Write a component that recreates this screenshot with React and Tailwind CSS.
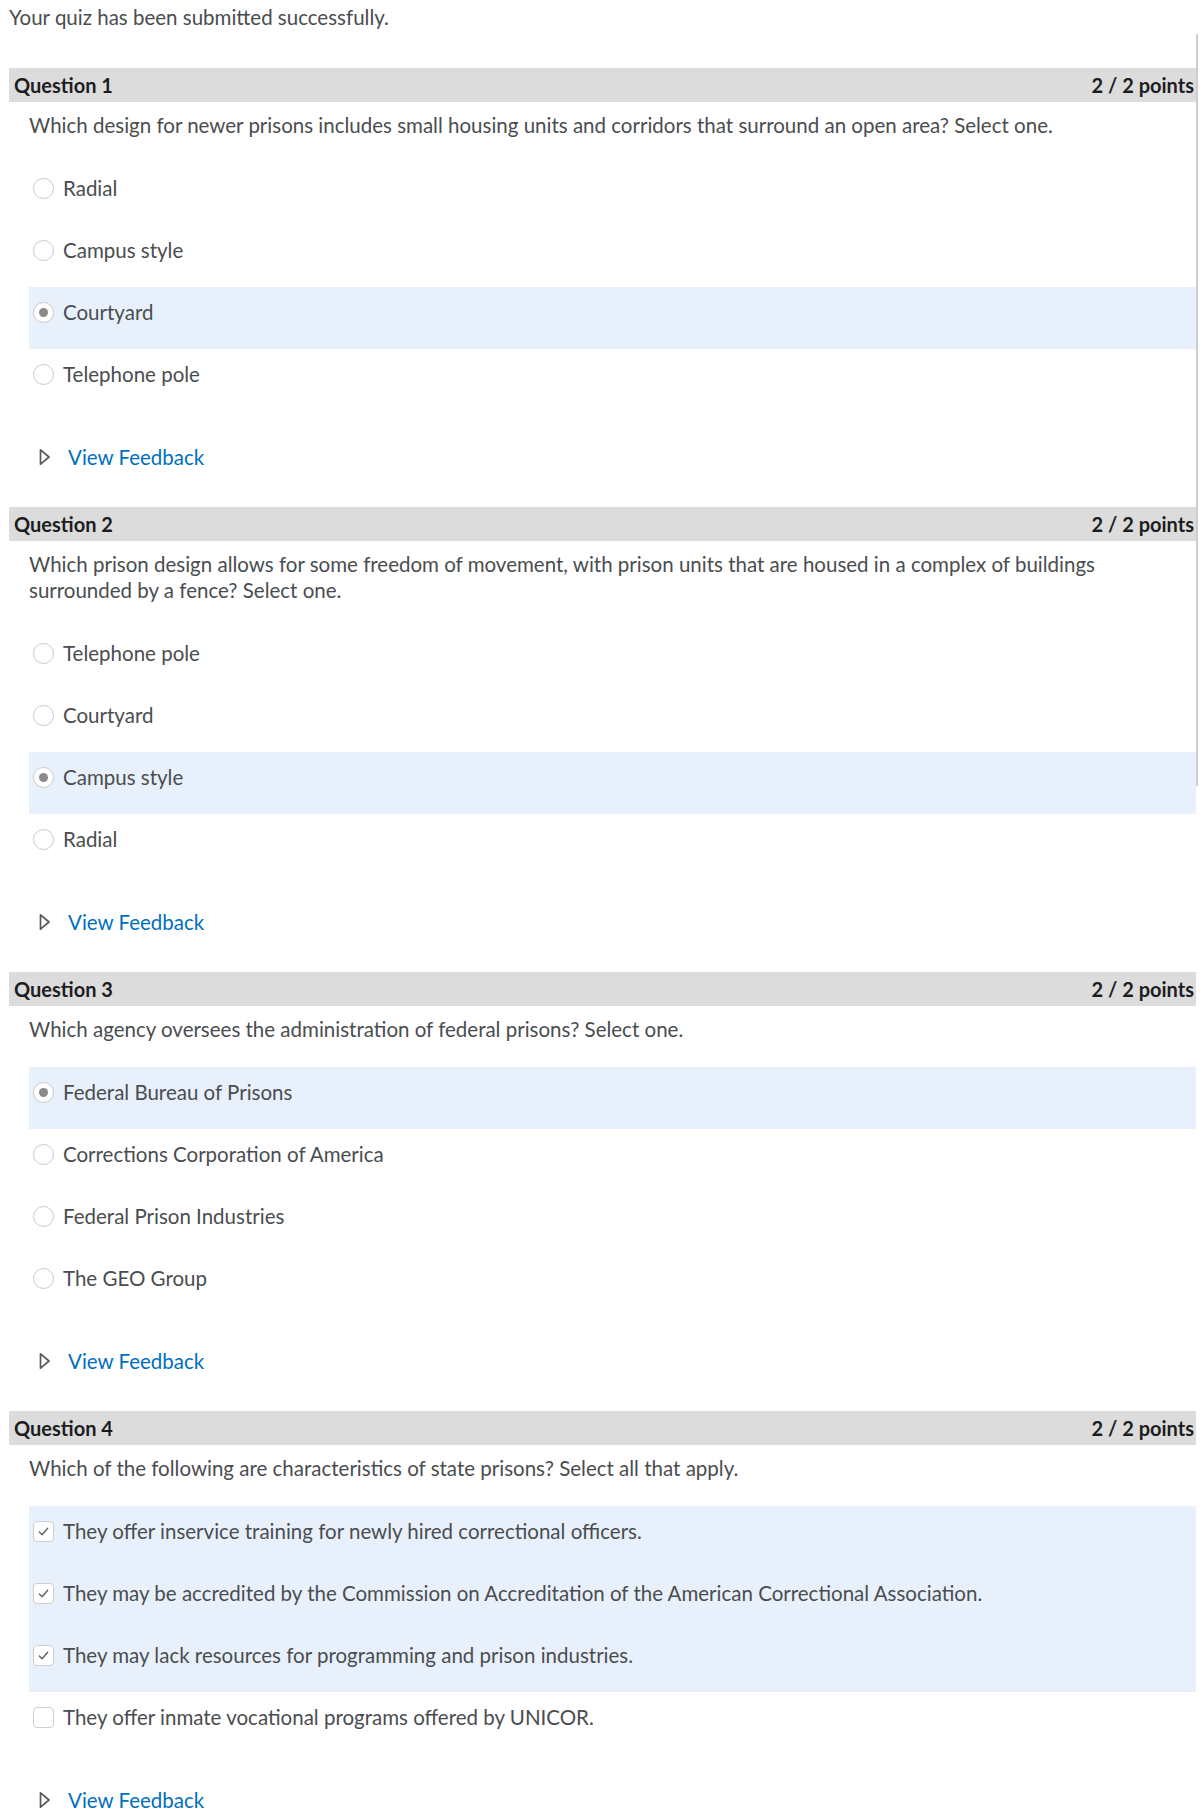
import React from 'react'

const questions = [
  {
    id: 1,
    text: 'Which design for newer prisons includes small housing units and corridors that surround an open area? Select one.',
    type: 'radio',
    options: [
      { label: 'Radial' },
      { label: 'Campus style' },
      { label: 'Courtyard', selected: true },
      { label: 'Telephone pole' },
    ],
  },
  {
    id: 2,
    text: 'Which prison design allows for some freedom of movement, with prison units that are housed in a complex of buildings surrounded by a fence? Select one.',
    type: 'radio',
    options: [
      { label: 'Telephone pole' },
      { label: 'Courtyard' },
      { label: 'Campus style', selected: true },
      { label: 'Radial' },
    ],
  },
  {
    id: 3,
    text: 'Which agency oversees the administration of federal prisons? Select one.',
    type: 'radio',
    options: [
      { label: 'Federal Bureau of Prisons', selected: true },
      { label: 'Corrections Corporation of America' },
      { label: 'Federal Prison Industries' },
      { label: 'The GEO Group' },
    ],
  },
  {
    id: 4,
    text: 'Which of the following are characteristics of state prisons? Select all that apply.',
    type: 'checkbox',
    options: [
      { label: 'They offer inservice training for newly hired correctional officers.', selected: true },
      { label: 'They may be accredited by the Commission on Accreditation of the American Correctional Association.', selected: true },
      { label: 'They may lack resources for programming and prison industries.', selected: true },
      { label: 'They offer inmate vocational programs offered by UNICOR.' },
    ],
  },
]

const Radio = ({ checked }) => (
  <span className="flex h-[21px] w-[21px] shrink-0 items-center justify-center rounded-full border border-[#c9c9c9] bg-white">
    {checked && <span className="h-[9px] w-[9px] rounded-full bg-[#8a8a8a]" />}
  </span>
)

const Checkbox = ({ checked }) => (
  <span className="flex h-[21px] w-[21px] shrink-0 items-center justify-center rounded-[4px] border border-[#cfcfcf] bg-white">
    {checked && (
      <svg width="13" height="13" viewBox="0 0 14 14" fill="none">
        <path d="M2.5 7.5l3 3 6-7" stroke="#5f6062" strokeWidth="1.5" strokeLinecap="round" strokeLinejoin="round" />
      </svg>
    )}
  </span>
)

const Question = ({ q }) => (
  <div>
    {/* Header */}
    <div className="flex h-[34px] items-center justify-between bg-[#dcdcdc] pl-[5px] pr-[2px] text-[20px] font-bold text-[#1c1d1f]">
      <span>Question {q.id}</span>
      <span>2 / 2 points</span>
    </div>

    <p className="mt-[10px] pl-5 pr-12 leading-[26px]">{q.text}</p>

    <div className="mt-[25px] ml-5">
      {q.options.map((opt) => (
        <div
          key={opt.label}
          className={`flex h-[62px] items-center gap-[9px] pb-[12px] pl-1 ${opt.selected ? 'bg-[#e8f1fb]' : ''}`}
        >
          {q.type === 'radio' ? <Radio checked={opt.selected} /> : <Checkbox checked={opt.selected} />}
          <span>{opt.label}</span>
        </div>
      ))}
    </div>

    <div className="mt-[33px] mb-[37px] flex h-[26px] items-center pl-[30px]">
      <svg width="12" height="18" viewBox="0 0 12 18" fill="none" className="mr-[17px]">
        <path d="M1.5 1.8l8.5 7.2-8.5 7.2z" stroke="#565a5c" strokeWidth="1.7" strokeLinejoin="round" />
      </svg>
      <span className="text-[#006fbf]">View Feedback</span>
    </div>
  </div>
)

export default function App() {
  return (
    <div className="relative min-h-[1810px] w-[1200px] bg-white font-['Lato','Liberation_Sans',sans-serif] text-[20.5px] text-[#4a4d50]">
      {/* scrollbar edge */}
      <div className="absolute right-[2px] top-[34px] h-[752px] w-[2px] bg-[#cdcdcd]" />

      <div className="ml-[9px] w-[1187px]">
        <p className="pt-[4px] pb-[38px] leading-[26px]">Your quiz has been submitted successfully.</p>
        {questions.map((q) => (
          <Question key={q.id} q={q} />
        ))}
      </div>
    </div>
  )
}
